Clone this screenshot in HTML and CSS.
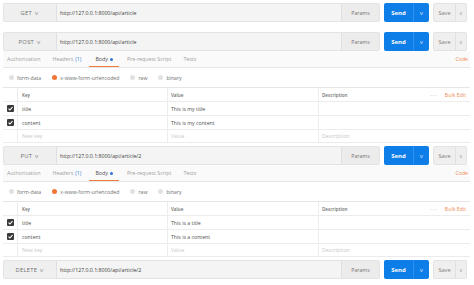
FILE: index.html
```html
<!DOCTYPE html>
<html>
<head>
<meta charset="utf-8">
<link rel="stylesheet" href="styles.css">
</head>
<body>
<div class="page">

  <div class="block first">
    <div class="bar">
      <div class="reqbox">
        <div class="method">GET <span class="chev">&#8744;</span></div>
        <div class="url">http://127.0.0.1:8000/api/article</div>
        <div class="params">Params</div>
      </div>
      <div class="send"><span class="send-label">Send</span><span class="send-drop">&#8744;</span></div>
      <div class="save"><span class="save-label">Save</span><span class="save-drop">&#8744;</span></div>
    </div>
  </div>

  <div class="block">
    <div class="bar">
      <div class="reqbox">
        <div class="method">POST <span class="chev">&#8744;</span></div>
        <div class="url">http://127.0.0.1:8000/api/article</div>
        <div class="params">Params</div>
      </div>
      <div class="send"><span class="send-label">Send</span><span class="send-drop">&#8744;</span></div>
      <div class="save"><span class="save-label">Save</span><span class="save-drop">&#8744;</span></div>
    </div>
    <div class="tabs">
      <span class="tab">Authorization</span>
      <span class="tab">Headers <span class="count">(1)</span></span>
      <span class="tab active">Body <span class="dot"></span></span>
      <span class="tab">Pre-request Script</span>
      <span class="tab">Tests</span>
      <span class="code">Code</span>
    </div>
    <div class="radios">
      <span class="radio"><span class="circle"></span>form-data</span>
      <span class="radio sel"><span class="circle"></span>x-www-form-urlencoded</span>
      <span class="radio"><span class="circle"></span>raw</span>
      <span class="radio"><span class="circle"></span>binary</span>
    </div>
    <div class="table">
      <div class="row head">
        <div class="c-check"></div>
        <div class="c-key">Key</div>
        <div class="c-val">Value</div>
        <div class="c-desc"><span>Description</span><span class="tools"><span class="dots">&middot;&middot;&middot;</span><span class="bulk">Bulk Edit</span></span></div>
      </div>
      <div class="row">
        <div class="c-check"><span class="cb"><svg viewBox="0 0 8 8" width="8" height="8"><path d="M1.8 4.2 L3.3 5.7 L6.3 2.4" fill="none" stroke="#fff" stroke-width="1.2"/></svg></span></div>
        <div class="c-key">title</div>
        <div class="c-val">This is my title</div>
        <div class="c-desc"></div>
      </div>
      <div class="row">
        <div class="c-check"><span class="cb"><svg viewBox="0 0 8 8" width="8" height="8"><path d="M1.8 4.2 L3.3 5.7 L6.3 2.4" fill="none" stroke="#fff" stroke-width="1.2"/></svg></span></div>
        <div class="c-key">content</div>
        <div class="c-val">This is my content</div>
        <div class="c-desc"></div>
      </div>
      <div class="row ph">
        <div class="c-check"></div>
        <div class="c-key">New key</div>
        <div class="c-val">Value</div>
        <div class="c-desc">Description</div>
      </div>
    </div>
  </div>

  <div class="block">
    <div class="bar">
      <div class="reqbox">
        <div class="method">PUT <span class="chev">&#8744;</span></div>
        <div class="url">http://127.0.0.1:8000/api/article/2</div>
        <div class="params">Params</div>
      </div>
      <div class="send"><span class="send-label">Send</span><span class="send-drop">&#8744;</span></div>
      <div class="save"><span class="save-label">Save</span><span class="save-drop">&#8744;</span></div>
    </div>
    <div class="tabs">
      <span class="tab">Authorization</span>
      <span class="tab">Headers <span class="count">(1)</span></span>
      <span class="tab active">Body <span class="dot"></span></span>
      <span class="tab">Pre-request Script</span>
      <span class="tab">Tests</span>
      <span class="code">Code</span>
    </div>
    <div class="radios">
      <span class="radio"><span class="circle"></span>form-data</span>
      <span class="radio sel"><span class="circle"></span>x-www-form-urlencoded</span>
      <span class="radio"><span class="circle"></span>raw</span>
      <span class="radio"><span class="circle"></span>binary</span>
    </div>
    <div class="table">
      <div class="row head">
        <div class="c-check"></div>
        <div class="c-key">Key</div>
        <div class="c-val">Value</div>
        <div class="c-desc"><span>Description</span><span class="tools"><span class="dots">&middot;&middot;&middot;</span><span class="bulk">Bulk Edit</span></span></div>
      </div>
      <div class="row">
        <div class="c-check"><span class="cb"><svg viewBox="0 0 8 8" width="8" height="8"><path d="M1.8 4.2 L3.3 5.7 L6.3 2.4" fill="none" stroke="#fff" stroke-width="1.2"/></svg></span></div>
        <div class="c-key">title</div>
        <div class="c-val">This is a title</div>
        <div class="c-desc"></div>
      </div>
      <div class="row">
        <div class="c-check"><span class="cb"><svg viewBox="0 0 8 8" width="8" height="8"><path d="M1.8 4.2 L3.3 5.7 L6.3 2.4" fill="none" stroke="#fff" stroke-width="1.2"/></svg></span></div>
        <div class="c-key">content</div>
        <div class="c-val">This is a content</div>
        <div class="c-desc"></div>
      </div>
      <div class="row ph">
        <div class="c-check"></div>
        <div class="c-key">New key</div>
        <div class="c-val">Value</div>
        <div class="c-desc">Description</div>
      </div>
    </div>
  </div>

  <div class="block">
    <div class="bar">
      <div class="reqbox">
        <div class="method">DELETE <span class="chev">&#8744;</span></div>
        <div class="url">http://127.0.0.1:8000/api/article/2</div>
        <div class="params">Params</div>
      </div>
      <div class="send"><span class="send-label">Send</span><span class="send-drop">&#8744;</span></div>
      <div class="save"><span class="save-label">Save</span><span class="save-drop">&#8744;</span></div>
    </div>
  </div>

</div>
</body>
</html>
```

FILE: styles.css
```css
* { box-sizing: border-box; }
html, body {
  margin: 0;
  padding: 0;
  background: #ffffff;
  font-family: "Open Sans", "Noto Sans", "Liberation Sans", sans-serif;
  color: #505050;
}
.page {
  width: 100%;
  height: 285px;
  padding: 3px 4px 0 3px;
  display: flex;
  flex-direction: column;
  gap: 3px;
  overflow: hidden;
}
.block.first { margin-bottom: 7px; }

/* request bar */
.bar {
  display: flex;
  height: 19px;
  padding-right: 3px;
}
.reqbox {
  flex: 1;
  display: flex;
  border: 1px solid #e3e3e3;
  border-radius: 2px;
  background: #f3f3f3;
}
.method {
  width: 53px;
  display: flex;
  align-items: center;
  justify-content: center;
  gap: 3px;
  font-size: 5.8px;
  letter-spacing: 0.3px;
  color: #707070;
  background: #efefef;
  border-right: 1px solid #e0e0e0;
}
.chev {
  font-size: 5px;
  color: #a0a0a0;
  transform: scaleX(1.4);
}
.url {
  flex: 1;
  display: flex;
  align-items: center;
  padding-left: 3px;
  font-size: 5.2px;
  color: #404040;
  background: #f4f4f4;
}
.params {
  width: 38px;
  display: flex;
  align-items: center;
  justify-content: center;
  font-size: 5.2px;
  color: #707070;
  background: #ececec;
  border-left: 1px solid #e0e0e0;
}
.send {
  width: 45px;
  margin-left: 4px;
  display: flex;
  background: #0d7de8;
  border-radius: 2px;
  color: #ffffff;
}
.send-label {
  flex: 1;
  display: flex;
  align-items: center;
  justify-content: center;
  font-weight: 700;
  font-size: 6px;
  border-right: 1px solid #2d8ff0;
}
.send-drop {
  width: 15px;
  display: flex;
  align-items: center;
  justify-content: center;
  font-size: 5px;
  color: #c4def8;
  transform: scaleX(1.3);
}
.save {
  width: 34px;
  margin-left: 4px;
  display: flex;
  background: #efefef;
  border: 1px solid #e3e3e3;
  border-radius: 2px;
  color: #808080;
}
.save-label {
  flex: 1;
  display: flex;
  align-items: center;
  justify-content: center;
  font-size: 5.6px;
  border-right: 1px solid #e0e0e0;
}
.save-drop {
  width: 10px;
  display: flex;
  align-items: center;
  justify-content: center;
  font-size: 5px;
  color: #a0a0a0;
}

/* tabs */
.tabs {
  height: 17px;
  display: flex;
  align-items: stretch;
  padding-left: 0;
  background: #fafafa;
  border-bottom: 1px solid #e6e6e6;
  font-size: 5.3px;
  color: #a0a0a0;
}
.tab {
  display: flex;
  align-items: center;
  gap: 2px;
  padding: 1px 4px 0 4px;
  margin-right: 4px;
  border-bottom: 1.5px solid transparent;
}
.tab.active {
  color: #505050;
  padding: 1px 6px 0 6px;
  border-bottom-color: #f47a3c;
}
.count { color: #3a84d8; }
.dot {
  width: 3px;
  height: 3px;
  border-radius: 50%;
  background: #2f6fd6;
  display: inline-block;
}
.code {
  margin-left: auto;
  align-self: center;
  color: #f08a55;
  font-size: 5.2px;
  padding-right: 2px;
}

/* radios */
.radios {
  height: 19px;
  display: flex;
  align-items: center;
  padding-left: 6px;
  font-size: 5.2px;
  color: #707070;
  gap: 11px;
}
.radio {
  display: flex;
  align-items: center;
  gap: 3px;
}
.circle {
  width: 5px;
  height: 5px;
  border-radius: 50%;
  background: #e2e2e2;
  display: inline-block;
}
.radio.sel .circle { background: #f27536; }

/* table */
.table {
  border-top: 1px solid #e6e6e6;
}
.row {
  display: flex;
  height: 14px;
  border-bottom: 1px solid #ececec;
  font-size: 5.2px;
  color: #505050;
}
.row.ph { height: 13px; }
.row.head {
  font-size: 4.6px;
  font-weight: 600;
  color: #707070;
}
.row > div {
  display: flex;
  align-items: center;
}
.c-check {
  width: 15px;
  justify-content: center;
  border-right: 1px solid #ececec;
}
.c-key {
  width: 150px;
  padding-left: 4px;
  border-right: 1px solid #ececec;
}
.c-val {
  width: 151px;
  padding-left: 3px;
  border-right: 1px solid #ececec;
}
.c-desc {
  flex: 1;
  padding-left: 3px;
  justify-content: space-between;
}
.tools { display: flex; align-items: center; gap: 8px; padding-right: 4px; }
.dots { color: #909090; font-size: 6px; letter-spacing: 0.6px; font-weight: 400; }
.bulk { color: #f08a55; font-weight: 400; font-size: 5.2px; }
.row.ph { color: #c8c8c8; }
.cb {
  width: 7px;
  height: 7px;
  border-radius: 1px;
  background: #3a3a3a;
  display: flex;
  align-items: center;
  justify-content: center;
}
.cb svg { width: 7px; height: 7px; }
```
